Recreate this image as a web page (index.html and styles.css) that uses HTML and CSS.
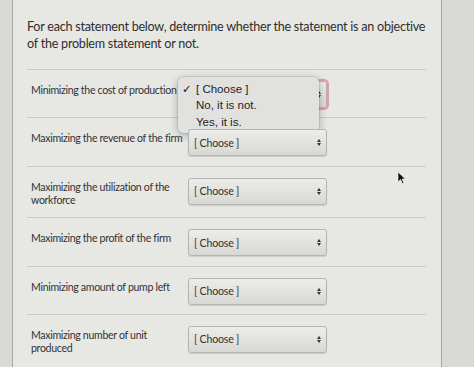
FILE: index.html
```html
<!DOCTYPE html>
<html>
<head>
<meta charset="utf-8">
<link rel="stylesheet" href="styles.css">
</head>
<body>
<div class="panel">
  <p class="intro">For each statement below, determine whether the statement is an objective of the problem statement or not.</p>
  <div class="rows">
    <div class="row">
      <div class="label">Minimizing the cost of production</div>
      <div class="select-wrap">
        <div class="select focused"><span class="value">[ Choose ]</span><span class="arrows"><i class="up"></i><i class="down"></i></span></div>
        <div class="popup">
          <div class="opt"><span class="check">✓</span>[ Choose ]</div>
          <div class="opt">No, it is not.</div>
          <div class="opt">Yes, it is.</div>
        </div>
      </div>
    </div>
    <div class="row">
      <div class="label">Maximizing the revenue of the firm</div>
      <div class="select-wrap"><div class="select"><span class="value">[ Choose ]</span><span class="arrows"><i class="up"></i><i class="down"></i></span></div></div>
    </div>
    <div class="row">
      <div class="label">Maximizing the utilization of the workforce</div>
      <div class="select-wrap"><div class="select"><span class="value">[ Choose ]</span><span class="arrows"><i class="up"></i><i class="down"></i></span></div></div>
    </div>
    <div class="row">
      <div class="label">Maximizing the profit of the firm</div>
      <div class="select-wrap"><div class="select"><span class="value">[ Choose ]</span><span class="arrows"><i class="up"></i><i class="down"></i></span></div></div>
    </div>
    <div class="row">
      <div class="label">Minimizing amount of pump left</div>
      <div class="select-wrap"><div class="select"><span class="value">[ Choose ]</span><span class="arrows"><i class="up"></i><i class="down"></i></span></div></div>
    </div>
    <div class="row last">
      <div class="label">Maximizing number of unit produced</div>
      <div class="select-wrap"><div class="select"><span class="value">[ Choose ]</span><span class="arrows"><i class="up"></i><i class="down"></i></span></div></div>
    </div>
  </div>
  <svg class="cursor" width="10" height="14" viewBox="0 0 10 14"><path d="M1 1 L1 11 L3.5 8.6 L5.4 12.6 L6.9 11.9 L5 8 L8.4 8 Z" fill="#111" stroke="#fff" stroke-width="0.6"/></svg>
</div>
</body>
</html>
```
FILE: styles.css
```css
html, body {
  margin: 0;
  padding: 0;
  background: #d9d9d6;
  height: 100%;
  overflow: hidden;
}
.panel {
  position: relative;
  margin-left: 12px;
  width: 430px;
  height: 367px;
  background: #e7e7e4;
  border-left: 1px solid #a8a8a5;
  border-right: 1px solid #a8a8a5;
  padding: 0 15px 0 14px;
  box-sizing: border-box;
  font-family: Lato, "Liberation Sans", sans-serif;
  color: #2f2f2f;
}
.intro {
  margin: 0;
  padding: 18px 0 17px;
  font-size: 12.6px;
  letter-spacing: -0.25px;
  line-height: 17px;
  border-bottom: 1px solid #c9c9c6;
}
.row {
  display: grid;
  grid-template-columns: 157px 139px;
  padding: 11px 0 9.4px 4px;
  border-bottom: 1px solid #c9c9c6;
}
.row.last { border-bottom: none; }
.label {
  font-size: 10.6px;
  letter-spacing: -0.33px;
  line-height: 13.5px;
  padding-top: 3px;
  color: #333;
}
.select-wrap { position: relative; }
.select {
  height: 27px;
  box-sizing: border-box;
  border: 1px solid #b4b4b1;
  border-radius: 3px;
  background: linear-gradient(#ececea, #d8d8d5);
  box-shadow: 0 1px 1px rgba(0,0,0,0.12);
  display: flex;
  align-items: center;
  justify-content: space-between;
  padding: 0 5px 0 5px;
  font-size: 10.6px;
  letter-spacing: -0.2px;
  color: #333;
}
.select.focused {
  box-shadow: 0 0 0 2px #e39aac;
}
.select.focused .value { visibility: hidden; }
.arrows {
  display: flex;
  flex-direction: column;
  gap: 1px;
}
.arrows i {
  display: block;
  width: 0;
  height: 0;
  border-left: 2.5px solid transparent;
  border-right: 2.5px solid transparent;
}
.arrows .up { border-bottom: 3px solid #333; }
.arrows .down { border-top: 3px solid #333; }
.popup {
  position: absolute;
  left: -10px;
  top: -4px;
  width: 141px;
  height: 56px;
  box-sizing: border-box;
  padding: 4px 0 0 4px;
  background: #e1e1df;
  border-radius: 5px;
  box-shadow: 0 2px 8px rgba(0,0,0,0.28), 0 0 0 0.5px rgba(0,0,0,0.15);
  font-family: "Liberation Sans", Arial, sans-serif;
  font-size: 11.5px;
  color: #1e1e1e;
}
.opt {
  line-height: 16.3px;
  padding-left: 14px;
  position: relative;
}
.check {
  position: absolute;
  left: 0;
  top: 0;
  font-family: "DejaVu Sans", sans-serif;
  font-size: 11.5px;
  font-weight: bold;
}
.cursor {
  position: absolute;
  left: 384px;
  top: 171px;
}
```
